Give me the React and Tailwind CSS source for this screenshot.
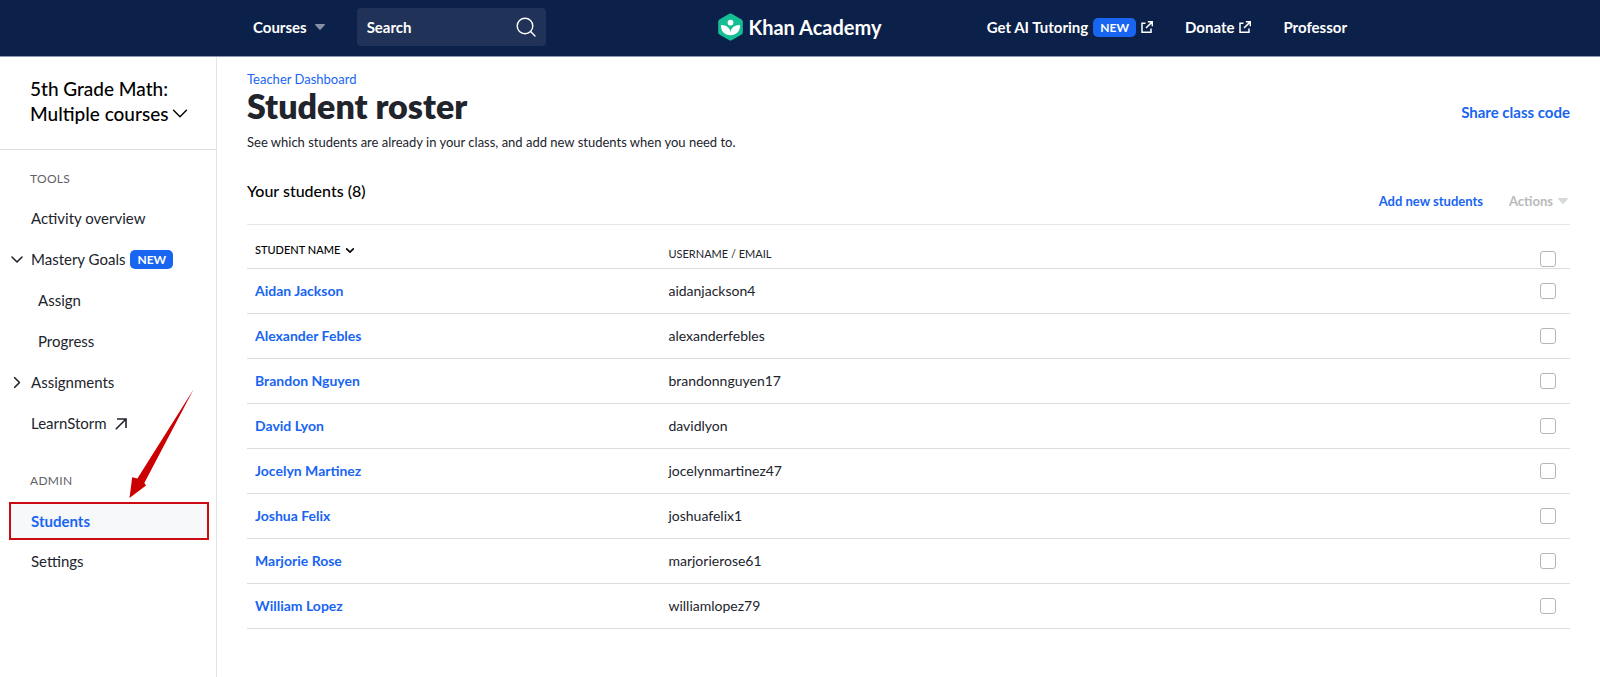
import { useState } from "react";

const students = [
  { name: "Aidan Jackson", username: "aidanjackson4" },
  { name: "Alexander Febles", username: "alexanderfebles" },
  { name: "Brandon Nguyen", username: "brandonnguyen17" },
  { name: "David Lyon", username: "davidlyon" },
  { name: "Jocelyn Martinez", username: "jocelynmartinez47" },
  { name: "Joshua Felix", username: "joshuafelix1" },
  { name: "Marjorie Rose", username: "marjorierose61" },
  { name: "William Lopez", username: "williamlopez79" },
];

function ExternalIcon() {
  return (
    <svg className="w-3 h-3" viewBox="0 0 12 12" fill="none" stroke="currentColor" strokeWidth="1.5">
      <path d="M4.5 2.2H1v9h9V7.5M6.8.8h4.5v4.5M11.2.9 5 7" />
    </svg>
  );
}

function Caret({ className }) {
  return (
    <svg className={className} viewBox="0 0 10 6" fill="currentColor">
      <path d="M.6 0h8.8c.5 0 .7.5.4.9L5.5 5.7c-.3.3-.7.3-1 0L.2.9C-.1.5.1 0 .6 0z" />
    </svg>
  );
}

function Chevron({ className, strokeWidth = 1.6 }) {
  return (
    <svg className={className} viewBox="0 0 12 7" fill="none" stroke="currentColor" strokeWidth={strokeWidth} strokeLinecap="round" strokeLinejoin="round">
      <path d="M1 1l5 5 5-5" />
    </svg>
  );
}

function NewBadge() {
  return (
    <span className="bg-[#1865f2] text-white text-xs font-bold leading-[19px] rounded-[5px] px-[7px]">NEW</span>
  );
}

function Header() {
  return (
    <header className="bg-[#0b2149] border-b border-[#8f94b5] text-white">
      <div className="max-w-[1096px] mx-auto h-14 px-px pb-[2px] grid grid-cols-[1fr_auto_1fr] items-center text-[15px] font-bold">
        <div className="flex items-center gap-8">
          <button className="flex items-center gap-2">
            Courses
            <Caret className="w-[10px] h-[6px] text-[#8590a4]" />
          </button>
          <label className="flex items-center w-[189px] h-[38px] rounded bg-[#203257] px-[10px]">
            <input
              type="text"
              aria-label="Search"
              placeholder="Search"
              className="flex-1 min-w-0 bg-transparent outline-none placeholder:text-white"
            />
            <svg className="w-5 h-5" viewBox="0 0 20 20" fill="none" stroke="currentColor" strokeWidth="1.4" strokeLinecap="round">
              <circle cx="9" cy="9" r="7.8" />
              <path d="M14.6 14.6l4.4 4.4" />
            </svg>
          </label>
        </div>

        <a href="#" className="flex items-center gap-[5px] text-xl leading-7" aria-label="Khan Academy">
          <svg className="w-[25px] h-7" viewBox="0 0 25 28">
            <path d="M11.3.8 1.4 6.4C.6 6.9.2 7.6.2 8.5v11c0 .9.4 1.6 1.2 2.1l9.9 5.6c.8.4 1.600.4 2.400 0l9.900-5.600c.8-.5 1.200-1.200 1.200-2.100v-11c0-.9-.4-1.600-1.200-2.100L13.700.8c-.8-.4-1.600-.4-2.400 0z" fill="#14bf96" />
            <circle cx="12.500" cy="9.600" r="2.900" fill="#fff" />
            <path d="M3 12c5.300-.2 9 3 9.500 7.200.5-4.200 4.200-7.400 9.500-7.200.3 6.100-3.600 10.200-9.500 10.200S2.700 18.100 3 12z" fill="#fff" />
          </svg>
          Khan Academy
        </a>

        <nav className="flex items-center justify-end gap-8">
          <a href="#" className="flex items-center gap-[5px]">
            Get AI Tutoring
            <NewBadge />
            <ExternalIcon />
          </a>
          <a href="#" className="flex items-center gap-[5px]">
            Donate
            <ExternalIcon />
          </a>
          <a href="#">Professor</a>
        </nav>
      </div>
    </header>
  );
}

function Sidebar() {
  return (
    <aside className="relative w-[217px] shrink-0 border-r border-[#e3e4e6] text-[15px] text-[#21242c]">
      <button className="w-full h-[93px] pl-[30px] pb-1 border-b border-[#dcdde0] text-left text-[19px] leading-[25px] font-medium text-black">
        5th Grade Math:
        <span className="flex items-center gap-1">
          Multiple courses
          <Chevron className="w-4 h-[9px]" strokeWidth={1.1} />
        </span>
      </button>

      <nav className="pt-[17px]">
        <h2 className="pl-[30px] text-xs leading-6 tracking-wide text-[#5f6168]">TOOLS</h2>
        <ul className="mt-[7px] leading-[41px]">
          <li><a href="#" className="block pl-[31px]">Activity overview</a></li>
          <li>
            <a href="#" className="flex items-center pl-[11px]">
              <Chevron className="w-3 h-[7px] mr-2" />
              <span className="mr-[5px]">Mastery Goals</span>
              <NewBadge />
            </a>
          </li>
          <li><a href="#" className="block pl-[38px]">Assign</a></li>
          <li><a href="#" className="block pl-[38px]">Progress</a></li>
          <li>
            <a href="#" className="flex items-center pl-[11px]">
              <Chevron className="w-3 h-[7px] mr-2 -rotate-90" />
              Assignments
            </a>
          </li>
          <li>
            <a href="#" className="flex items-center gap-2 pl-[31px]">
              LearnStorm
              <svg className="w-3 h-3" viewBox="0 0 12 12" fill="none" stroke="currentColor" strokeWidth="1.6">
                <path d="M2 1h9v9M11 1 .8 11.2" />
              </svg>
            </a>
          </li>
        </ul>

        <h2 className="mt-[25px] pl-[30px] text-xs leading-6 tracking-wide text-[#5f6168]">ADMIN</h2>
        <ul className="mt-[9px] flex flex-col gap-px">
          <li>
            <a href="#" className="block ml-[9px] mr-[7px] border-2 border-[#cc0a12] bg-[#f7f8fa] pl-5 leading-[34px] font-bold text-[#1865f2]">
              Students
            </a>
          </li>
          <li><a href="#" className="block pl-[31px] leading-[41px]">Settings</a></li>
        </ul>
      </nav>

      {/* red pointer over the menu */}
      <svg className="absolute left-[129px] top-[332px] w-[66px] h-[110px] pointer-events-none" viewBox="0 0 66 110" fill="#cc0000">
        <path d="M64.5.5 15.3 94l1.700 2.500L.5 109 3.200 88.200l5.200 1.200z" />
      </svg>
    </aside>
  );
}

export default function App() {
  const [checked, setChecked] = useState([]);

  const toggle = (username) => {
    setChecked((prev) =>
      prev.includes(username) ? prev.filter((u) => u !== username) : [...prev, username]
    );
  };

  const toggleAll = () => {
    setChecked(checked.length === students.length ? [] : students.map((s) => s.username));
  };

  const box = "block w-4 h-4 ml-auto appearance-none rounded-[3px] border border-[#b5b6ba] bg-white checked:bg-[#1865f2]";

  return (
    <div className="min-h-screen flex flex-col bg-white font-['Lato',sans-serif] text-[#21242c]">
      <Header />
      <div className="flex flex-1">
        <Sidebar />

        <main className="flex-1 min-w-0 px-[30px] pt-3">
          <div className="flex items-center justify-between">
            <div>
              <a href="#" className="block text-[13px] leading-5 text-[#1865f2]">Teacher Dashboard</a>
              <h1 className="text-[34px] leading-[34px] font-extrabold">Student roster</h1>
              <p className="mt-[9px] text-[13px] leading-5">
                See which students are already in your class, and add new students when you need to.
              </p>
            </div>
            <a href="#" className="pt-[3px] text-[15px] font-bold text-[#1865f2]">Share class code</a>
          </div>

          <div className="mt-[27px] flex justify-between h-[45px]">
            <h2 className="text-base leading-6 font-medium text-black">Your students (8)</h2>
            <div className="flex items-end gap-[26px] pb-[13px] text-[13px] leading-5 font-bold">
              <button className="text-[#1865f2]">Add new students</button>
              <button disabled className="flex items-center gap-[5px] pr-[2px] text-[#b8b9bb]">
                Actions
                <Caret className="w-[10px] h-[6px] text-[#d6d8da]" />
              </button>
            </div>
          </div>

          <table className="w-full table-fixed border-t border-[#e6e7e9] text-left">
            <thead>
              <tr className="h-11 border-b border-[#dcdde0] text-[11px]">
                <th className="w-[31.25%] pl-2 pt-[7px] font-medium text-black">
                  <button className="flex items-center gap-[6px]">
                    STUDENT NAME
                    <Chevron className="w-2 h-[5px]" strokeWidth={2.4} />
                  </button>
                </th>
                <th className="pl-2 pt-[15px] font-normal">USERNAME / EMAIL</th>
                <th className="w-16 pr-[14px] pb-px align-bottom">
                  <input type="checkbox" aria-label="Select all students" className={box} checked={checked.length === students.length} onChange={toggleAll} />
                </th>
              </tr>
            </thead>
            <tbody>
              {students.map((s) => (
                <tr key={s.username} className="h-[45px] border-b border-[#dcdde0] text-[14px]">
                  <td className="pl-2 pb-px font-bold text-[#1865f2]"><a href="#">{s.name}</a></td>
                  <td className="pl-2 pb-px">{s.username}</td>
                  <td className="pr-[14px] pb-px">
                    <input type="checkbox" aria-label={`Select ${s.name}`} className={box} checked={checked.includes(s.username)} onChange={() => toggle(s.username)} />
                  </td>
                </tr>
              ))}
            </tbody>
          </table>
        </main>
      </div>
    </div>
  );
}
